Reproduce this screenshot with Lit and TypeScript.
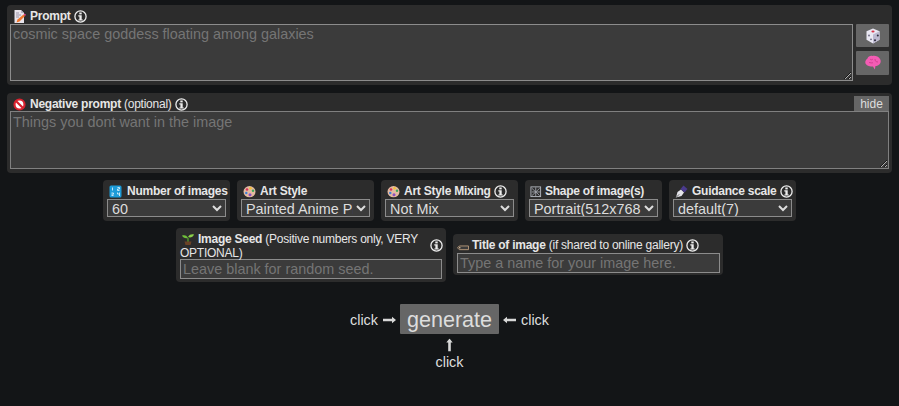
import { LitElement, html, css, svg } from 'lit';
import { customElement } from 'lit/decorators.js';

const info = html`<svg class="info" viewBox="0 0 13 13"><circle cx="6.500" cy="6.500" r="5.600" fill="none" stroke="#eee" stroke-width="1.300"/><rect x="5.300" y="2.500" width="2.400" height="1.900" fill="#eee"/><path d="M4.300 5.200h3.400v4.200h1.100v1.200H4.300V9.400h1.100V6.400H4.300z" fill="#eee"/></svg>`;

const icons: Record<string, ReturnType<typeof svg>> = {
  memo: svg`<path d="M1.500 0h6.500l3 3v10h-9.500z" fill="#e8e4ec"/><path d="M8 0l3 3h-3z" fill="#b9b3c4"/><path d="M3 3h3M3 5h5M3 7h3" stroke="#9a94a8"/><path d="M3.500 12.500l1-3 6-5 1.500 1.500-5.500 5.500z" fill="#f0762c"/><path d="M10.500 4.500l1.500 1.500 1-1.200-1.400-1.400z" fill="#e8488a"/>`,
  no: svg`<circle cx="6.500" cy="6.500" r="5" fill="#fff" stroke="#d8222e" stroke-width="2.200"/><path d="M3 3l7 7" stroke="#d8222e" stroke-width="2.200"/>`,
  num: svg`<rect x=".5" y=".5" width="12" height="12" rx="1.500" fill="#1d9bd8"/><path d="M3.500 2.500v3M8.500 2.500h2v1.500h-2v1.500h2M2.500 8h2v1.200h-2M2.500 10.500h2M8.500 7.500v1.500h2M10.500 7.500v3.500" fill="none" stroke="#d4eefa" stroke-width=".9"/>`,
  palette: svg`<ellipse cx="6.500" cy="6.700" rx="6" ry="5.600" fill="#e3b9a0"/><circle cx="4" cy="4.500" r="1.300" fill="#d8345a"/><circle cx="7.500" cy="3.200" r="1.200" fill="#f2c230"/><circle cx="10" cy="5.700" r="1.200" fill="#3aa85a"/><circle cx="3.300" cy="8" r="1.200" fill="#3a7fd8"/><circle cx="7" cy="9.700" r="1.500" fill="#8a4fc0"/>`,
  frame: svg`<rect x="1" y="1.500" width="10.500" height="10.500" fill="none" stroke="#b4b8c0"/><path d="M2 3l8.500 8M10.500 3L2 11M6.200 2v9.500M2 7h9" stroke="#a4a8b0" stroke-width=".9"/>`,
  pen: svg`<path d="M1 12.500l1.500-5.500 3.500-2.500 3 3-2.500 3.500z" fill="#e4e4ea"/><path d="M5.500 4l3-3.500 4 3.500-3 3.500z" fill="#4a3a8c"/><path d="M1 12.500l3.200-3.200" stroke="#666"/>`,
  sprout: svg`<path d="M6.500 13V6" stroke="#4d9a2a" stroke-width="1.400"/><path d="M6.500 6C5 3 3 3 .5 3.500 1.500 6 4 6.500 6.500 6z" fill="#6fbf3a"/><path d="M6.500 5C8 2.500 10 2 12.500 2.500 11.500 5 9 6 6.500 5z" fill="#8ad04a"/><path d="M3 9.500h7l-1 3.500H4z" fill="#6b4226"/>`,
  tag: svg`<path d="M.5 9l2-2h10v4h-10z" fill="#3a3a3a" stroke="#b9997a"/><circle cx="3" cy="9" r=".8" fill="#e8c9a8"/>`,
  dice: svg`<path d="M8 .500l6.500 2.700v8.600L8 15.500 1.500 11.800V3.200z" fill="#e9e7f2"/><path d="M8 6.500v9l6.500-3.700V3.200z" fill="#bcb8cf"/><ellipse cx="8" cy="3.500" rx="1.600" ry="1" fill="#d8344a"/><circle cx="10" cy="12.300" r="1" fill="#2c2a3a"/><circle cx="12.800" cy="7.500" r="1" fill="#2c2a3a"/><circle cx="4" cy="7.500" r=".9" fill="#6a6780"/><circle cx="6" cy="11.300" r=".9" fill="#6a6780"/>`,
  brain: svg`<path d="M2.500 3.500C3 1.500 5.500.5 7.500 1c2.500-.7 6 .5 7.500 3 1.200 1.700.8 4.500-1 5.800-1 1-2.500 1.200-3.500 1.200l-.7 3.500L8 11.500C5 11.500 2 11 .8 9 -.3 7.300.5 4.700 2.500 3.500z" fill="#f45cb4"/><path d="M5 4c1 1 2 1 3 0M10 4c0 2 1 3 3 3M4 7.500c1.500 0 3 1 4 0" fill="none" stroke="#c9388a" stroke-width=".8"/>`,
};

const icon = (name: string) =>
  html`<svg class="icon" viewBox="0 0 13 13">${icons[name]}</svg>`;

const btnIcon = (name: string) =>
  html`<svg class="btn-icon" viewBox="0 0 16 16">${icons[name]}</svg>`;

const arrow = (rot: number) =>
  html`<svg class="arrow" viewBox="0 0 13 8" style="transform: rotate(${rot}deg)"><path d="M0 2.700h9V.8L13 4 9 7.200V5.300H0z" fill="#d8d8d8"/></svg>`;

@customElement('app-root')
export class AppRoot extends LitElement {
  static styles = css`
    :host {
      display: block;
      height: 406px;
      box-sizing: border-box;
      padding: 5px 7px 0;
      background: #131517;
      color: #ddd;
      font-family: 'Liberation Sans', Arial, sans-serif;
      font-size: 12px;
      letter-spacing: -0.25px;
      overflow: hidden;
    }
    .panel {
      background: #2c2c2c;
      border-radius: 4px;
      box-sizing: border-box;
    }
    .prompt {
      height: 80px;
      padding: 3px;
      position: relative;
      margin-bottom: 8px;
    }
    .prompt.neg { margin-bottom: 7px; }
    .prompt.neg .label { height: 15px; }
    label {
      display: flex;
      align-items: center;
      box-sizing: border-box;
      padding-top: 1px;
      font-weight: bold;
      line-height: 15px;
      height: 16px;
      color: #e6e6e6;
      white-space: nowrap;
    }
    .opt { font-weight: normal; }
    .icon { width: 13px; height: 13px; flex: none; margin-right: 4px; }
    .info { width: 13px; height: 13px; flex: none; margin-left: 3px; }
    .prompt .label { padding-left: 3px; }
    .prompt-body { display: flex; gap: 3px; }
    textarea, input, select {
      box-sizing: border-box;
      background: #3b3b3b;
      border: 1px solid #8c8c8c;
      border-radius: 0;
      color: #ddd;
      font-family: 'Liberation Sans', Arial, sans-serif;
      font-size: 14.400px;
      letter-spacing: normal;
      outline: none;
      margin: 0;
      color-scheme: dark;
    }
    textarea { display: block; flex: 1; height: 57px; padding: 1px 2px; min-width: 0; }
    .full { width: 100%; height: 58px; padding-top: 2px; border-color: #808080; }
    ::placeholder { color: #757575; opacity: 1; }
    .side { display: flex; flex-direction: column; gap: 4px; }
    .side button {
      width: 33px;
      height: 23px;
      padding: 0;
      border: 0;
      border-radius: 1px;
      background: #666;
      display: flex;
      align-items: center;
      justify-content: center;
    }
    .side button + button { height: 24px; }
    .btn-icon { width: 16px; height: 16px; }
    .hide {
      position: absolute;
      top: 3px;
      right: 3px;
      width: 35px;
      height: 15px;
      padding: 0;
      border: 0;
      background: #666;
      color: #ddd;
      font: 12px 'Liberation Sans', Arial, sans-serif;
    }
    .row { display: flex; justify-content: center; gap: 7px; align-items: flex-start; }
    .opts { margin-bottom: 7px; }
    .field { padding: 3px 4px 4px; height: 41px; }
    .field .icon { margin: 0 4px 0 2px; }
    .field:first-child .icon { margin-right: 5px; }
    .field:nth-child(4) .icon { width: 12px; margin: 0 3px 0 1px; }
    .field select { display: block; width: 100%; height: 18px; padding: 0; }
    input { display: block; height: 20px; padding: 0 2px; }
    .seed { width: 270px; height: 54px; padding: 4px 4px 0; }
    .seed input { width: 262px; }
    .seed label { height: 27px; padding-top: 0; justify-content: space-between; white-space: normal; }
    .seed .text { font-weight: normal; line-height: 14px; display: block; width: 250px; }
    .seed .text b { font-weight: bold; }
    .seed .text .icon { width: 14px; margin: 0 3px 0 1px; vertical-align: -2px; }
    .seed .info { margin-right: -1px; }
    .title { width: 270px; height: 41px; padding: 3px 3px 0 4px; margin-top: 6px; }
    .title input { width: 263px; }
    .title .icon { width: 12px; margin-right: 3px; }
    .generate {
      display: flex;
      justify-content: center;
      align-items: center;
      margin-top: 22px;
      font-size: 14.400px;
      letter-spacing: normal;
    }
    .generate span { margin-top: 2px; }
    .generate button {
      width: 99px;
      height: 30px;
      padding: 1px 0 0;
      border: 0;
      border-radius: 1px;
      background: #666;
      color: #ddd;
      font: 21.600px 'Liberation Sans', Arial, sans-serif;
    }
    .arrow { width: 13px; height: 8px; flex: none; margin: 2px 4px 0 5px; }
    .generate button + .arrow { margin: 2px 5px 0 4px; }
    .below {
      display: flex;
      flex-direction: column;
      align-items: center;
      font-size: 14.400px;
      letter-spacing: normal;
      margin-top: 4px;
    }
    .below .arrow { margin: 3px 0 5px; }
  `;

  private field(label: unknown, width: number, value: string) {
    return html`<div class="panel field" style="width: ${width}px">
      <label>${label}</label>
      <select><option>${value}</option></select>
    </div>`;
  }

  render() {
    return html`
      <div class="panel prompt">
        <label class="label">${icon('memo')}Prompt${info}</label>
        <div class="prompt-body">
          <textarea placeholder="cosmic space goddess floating among galaxies"></textarea>
          <div class="side">
            <button>${btnIcon('dice')}</button>
            <button>${btnIcon('brain')}</button>
          </div>
        </div>
      </div>
      <div class="panel prompt neg">
        <label class="label">${icon('no')}Negative prompt&nbsp;<span class="opt">(optional)</span>${info}</label>
        <button class="hide">hide</button>
        <textarea class="full" placeholder="Things you dont want in the image"></textarea>
      </div>
      <div class="row opts">
        ${this.field(html`${icon('num')}Number of images`, 127, '60')}
        ${this.field(html`${icon('palette')}Art Style`, 137, 'Painted Anime Pl')}
        ${this.field(html`${icon('palette')}Art Style Mixing${info}`, 137, 'Not Mix')}
        ${this.field(html`${icon('frame')}Shape of image(s)`, 137, 'Portrait(512x768')}
        ${this.field(html`${icon('pen')}Guidance scale${info}`, 127, 'default(7)')}
      </div>
      <div class="row">
        <div class="panel seed">
          <label>
            <span class="text">${icon('sprout')}<b>Image Seed</b> (Positive numbers only, VERY OPTIONAL)</span>
            ${info}
          </label>
          <input placeholder="Leave blank for random seed." />
        </div>
        <div class="panel title">
          <label>${icon('tag')}Title of image&nbsp;<span class="opt">(if shared to online gallery)</span>${info}</label>
          <input placeholder="Type a name for your image here." />
        </div>
      </div>
      <div class="generate">
        <span>click</span>${arrow(0)}
        <button>generate</button>
        ${arrow(180)}<span>click</span>
      </div>
      <div class="below">${arrow(-90)}click</div>
    `;
  }
}
